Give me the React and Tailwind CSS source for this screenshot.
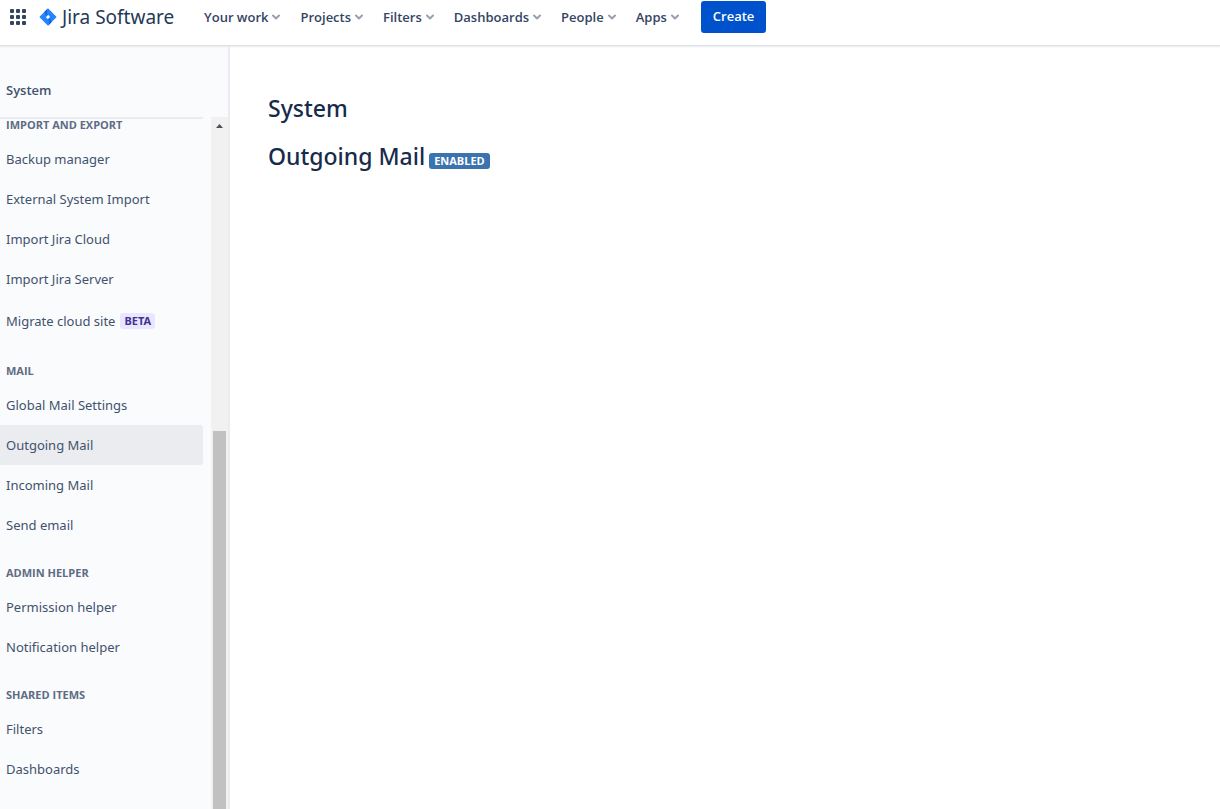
import React from "react";

const navItems = ["Your work", "Projects", "Filters", "Dashboards", "People", "Apps"];

const sections = [
  {
    title: "Import and export",
    items: [
      { label: "Backup manager" },
      { label: "External System Import" },
      { label: "Import Jira Cloud" },
      { label: "Import Jira Server" },
      { label: "Migrate cloud site", badge: "Beta" },
    ],
  },
  {
    title: "Mail",
    items: [
      { label: "Global Mail Settings" },
      { label: "Outgoing Mail", active: true },
      { label: "Incoming Mail" },
      { label: "Send email" },
    ],
  },
  {
    title: "Admin helper",
    items: [{ label: "Permission helper" }, { label: "Notification helper" }],
  },
  {
    title: "Shared items",
    items: [{ label: "Filters" }, { label: "Dashboards" }],
  },
];

function SwitcherIcon() {
  const steps = [0, 6, 12];
  return (
    <svg width="16" height="16" viewBox="0 0 16 16" fill="#344563" aria-hidden="true">
      {steps.map((y) =>
        steps.map((x) => <rect key={`${x}-${y}`} x={x} y={y} width="4" height="4" rx="1" />)
      )}
    </svg>
  );
}

function JiraMark() {
  return (
    <svg width="18" height="18" viewBox="0 0 18 18" aria-hidden="true">
      <defs>
        <linearGradient id="jiraTop" x1="9" y1="4" x2="5" y2="8" gradientUnits="userSpaceOnUse">
          <stop offset="0" stopColor="#0052cc" />
          <stop offset="1" stopColor="#2684ff" />
        </linearGradient>
        <linearGradient id="jiraBottom" x1="9" y1="14" x2="13" y2="10" gradientUnits="userSpaceOnUse">
          <stop offset="0" stopColor="#0052cc" />
          <stop offset="1" stopColor="#2684ff" />
        </linearGradient>
      </defs>
      <path
        d="M17.200 8.400 9 .2.8 8.400a.9.9 0 0 0 0 1.200L9 17.800l8.200-8.200a.9.9 0 0 0 0-1.200ZM9 11.200 6.800 9 9 6.800 11.200 9Z"
        fill="#2684ff"
      />
      <path d="M9 6.800A4.600 4.600 0 0 1 9 .3L5.500 3.800 6.800 9Z" fill="url(#jiraTop)" />
      <path d="M11.200 9 9 11.200a4.600 4.600 0 0 1 0 6.500l3.500-3.500Z" fill="url(#jiraBottom)" />
    </svg>
  );
}

function Chevron() {
  return (
    <svg width="8" height="6" viewBox="0 0 8 6" fill="none" aria-hidden="true">
      <path
        d="M1 1.500 4 4.500 7 1.500"
        stroke="#97a0af"
        strokeWidth="2"
        strokeLinecap="round"
        strokeLinejoin="round"
      />
    </svg>
  );
}

function Header() {
  return (
    <header className="relative flex h-[45px] items-start bg-white pt-px pl-[10px] shadow-[0_1px_1px_#dfe1e6,0_2px_2px_#ebecf0]">
      <div className="flex h-8 items-center">
        <button type="button" aria-label="Switch to" className="mr-[13px]">
          <SwitcherIcon />
        </button>
        <a href="#" className="mr-[30px] flex items-center gap-[5px] font-['Noto_Sans',sans-serif] text-[19px] leading-5 text-[#253858]">
          <JiraMark />
          <span className="w-28 whitespace-nowrap pb-px">Jira Software</span>
        </a>
        <nav className="flex items-center gap-5">
          {navItems.map((item) => (
            <button
              key={item}
              type="button"
              className="flex items-center gap-1 whitespace-nowrap text-[13px] font-semibold leading-5 text-[#344563]"
            >
              {item}
              <Chevron />
            </button>
          ))}
        </nav>
        <button
          type="button"
          className="ml-[22px] h-8 rounded-[3px] bg-[#0052cc] px-3 text-[13px] font-semibold text-white"
        >
          Create
        </button>
      </div>
    </header>
  );
}

function Scrollbar() {
  return (
    <div className="flex w-[17px] flex-col items-center bg-[#f1f1f1]" aria-hidden="true">
      <div className="flex h-[17px] items-center justify-center">
        <svg width="7" height="4" viewBox="0 0 7 4" fill="#505050">
          <path d="M3.500 0 7 4H0Z" />
        </svg>
      </div>
      <div className="h-[297px]" />
      <div className="w-[13px] flex-1 bg-[#c1c1c1]" />
    </div>
  );
}

function SideItem({ label, badge, active }) {
  return (
    <li>
      <a
        href="#"
        className={`flex items-center gap-[5px] rounded-r-[3px] pl-[6px] font-['Noto_Sans',sans-serif] text-[13px] leading-5 text-[#42526e] ${
          badge ? "h-11" : "h-10"
        } ${active ? "bg-[#ebecf0]" : ""}`}
      >
        {label}
        {badge && (
          <span className="rounded-[3px] bg-[#eae6ff] px-1 text-[11px] font-bold uppercase leading-4 text-[#403294]">
            {badge}
          </span>
        )}
      </a>
    </li>
  );
}

function Sidebar() {
  return (
    <aside className="flex w-[230px] shrink-0 flex-col border-r-2 border-[#ebecf0] bg-[#fafbfc]">
      <h2 className="pt-[35px] pb-[17px] pl-[6px] text-[13px] font-semibold leading-5 text-[#42526e]">System</h2>
      <div className="flex flex-1 justify-between">
        <div className="w-[203px] border-t-2 border-[#ebecf0] pb-5">
          {sections.map((section) => (
            <section key={section.title} className="mt-[22px] first:mt-0">
              <h3 className="mb-2 pl-[6px] text-[11px] font-bold uppercase leading-3 text-[#5e6c84]">
                {section.title}
              </h3>
              <ul>
                {section.items.map((item) => (
                  <SideItem key={item.label} {...item} />
                ))}
              </ul>
            </section>
          ))}
        </div>
        <Scrollbar />
      </div>
    </aside>
  );
}

function App() {
  return (
    <div className="flex min-h-screen flex-col bg-white font-['Open_Sans','Noto_Sans',sans-serif]">
      <Header />
      <div className="flex flex-1">
        <Sidebar />
        <main className="flex-1 pt-[47px] pl-[38px] text-[#172b4d]">
          <h1 className="font-['Noto_Sans',sans-serif] text-[23px] font-medium leading-8">System</h1>
          <div className="mt-4 flex items-center gap-1">
            <h2 className="font-['Noto_Sans',sans-serif] text-[23px] font-medium leading-8">Outgoing Mail</h2>
            <span className="mt-[10px] rounded-[3px] bg-[#3b73af] px-[5px] text-[11px] font-bold uppercase leading-4 text-white">
              Enabled
            </span>
          </div>
        </main>
      </div>
    </div>
  );
}

export default App;
